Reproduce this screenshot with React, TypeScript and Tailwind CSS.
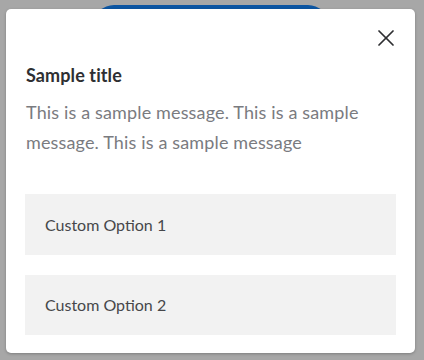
import { X } from "lucide-react";

export default function App() {
  return (
    <div className="relative w-[424px] h-[360px] overflow-hidden bg-[#a7a7a7] font-['Lato',sans-serif]">
      {/* page button peeking out behind the scrim */}
      <div className="absolute left-[94px] top-[5px] w-[234px] h-[40px] rounded-full bg-[#0c55a2]" />

      {/* ── Dialog ── */}
      <div className="relative ml-[6px] mt-[9px] w-[409px] rounded-[5px] bg-white px-[19px] pb-[18px] pt-[19px] shadow-[0_1px_3px_rgba(0,0,0,0.25)]">
        <div className="-mr-[4px] -mt-[4px] flex justify-end">
          <button className="flex h-[28px] w-[28px] items-center justify-center text-[#2e2f32]">
            <X size={28} strokeWidth={1.5} />
          </button>
        </div>

        <h2 className="mt-[10px] pl-[1px] text-[18px] font-bold leading-[26px] tracking-[0.1px] text-[#2e2f32]">
          Sample title
        </h2>
        <p className="mt-[9px] pl-[1px] text-[18px] leading-[30px] tracking-[0.15px] text-[#7a7b7f]">
          This is a sample message. This is a sample message. This is a sample message
        </p>

        <div className="mt-[37px] flex flex-col gap-[20px]">
          <div className="flex h-[61px] items-center bg-[#f2f2f2] px-[20px] text-[16px] text-[#46474a]">
            Custom Option 1
          </div>
          <div className="flex h-[60px] items-center bg-[#f2f2f2] px-[20px] text-[16px] text-[#46474a]">
            Custom Option 2
          </div>
        </div>
      </div>
    </div>
  );
}
